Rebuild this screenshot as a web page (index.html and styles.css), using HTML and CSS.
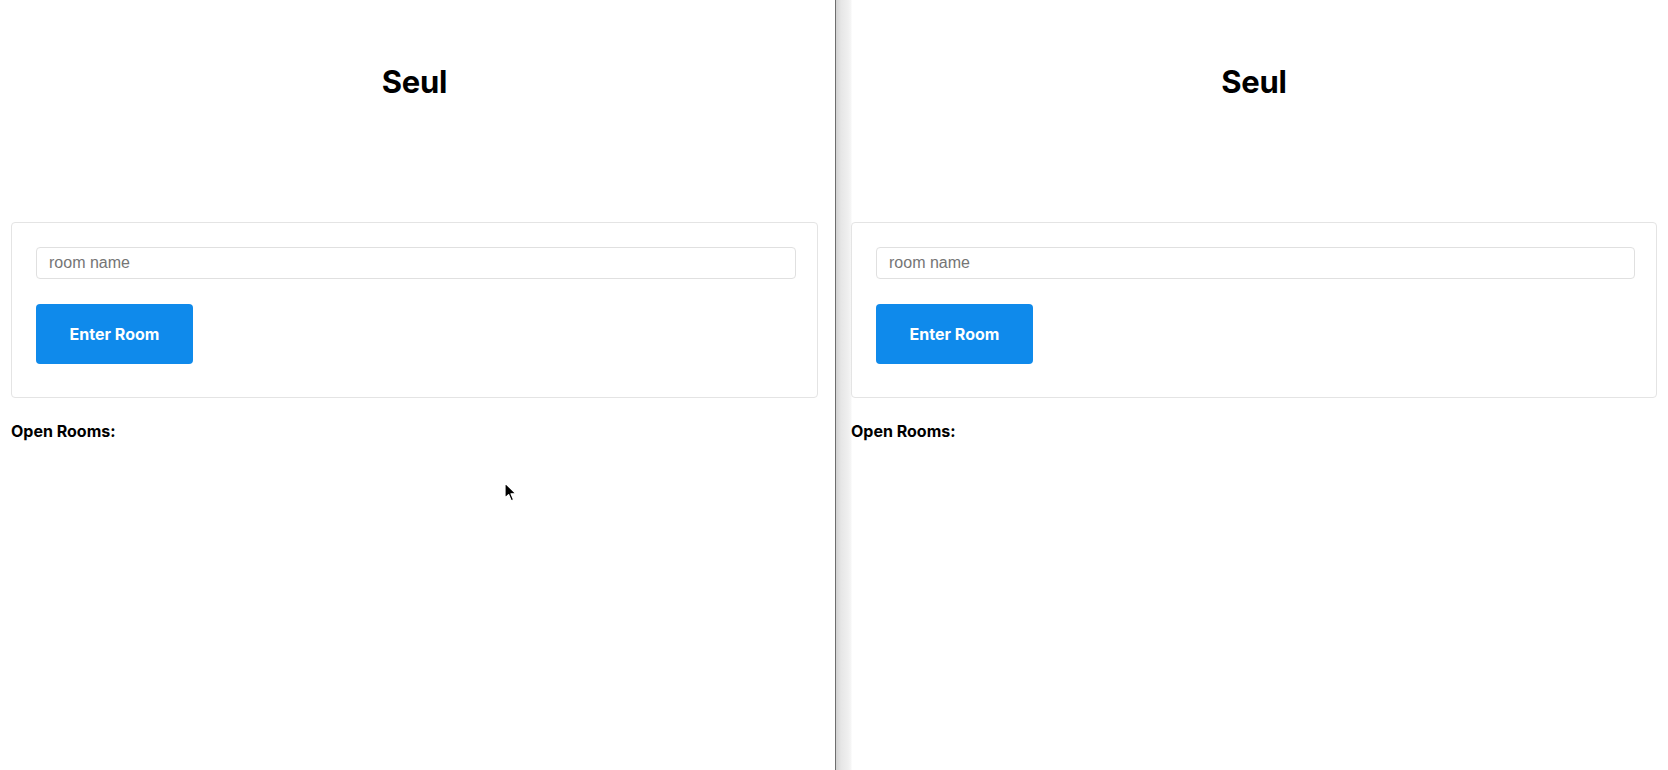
FILE: index.html
```html
<!DOCTYPE html>
<html lang="en">
<head>
<meta charset="utf-8">
<title>Seul</title>
<link rel="stylesheet" href="styles.css">
</head>
<body>
<div class="screen">
  <section class="pane pane-left">
    <h1 class="title">Seul</h1>
    <div class="card">
      <input class="room-input" type="text" placeholder="room name">
      <button class="enter-btn">Enter Room</button>
    </div>
    <h3 class="rooms-heading">Open Rooms:</h3>
  </section>
  <div class="gap"></div>
  <div class="divider"></div>
  <section class="pane pane-right">
    <h1 class="title">Seul</h1>
    <div class="card">
      <input class="room-input" type="text" placeholder="room name">
      <button class="enter-btn">Enter Room</button>
    </div>
    <h3 class="rooms-heading">Open Rooms:</h3>
  </section>
  <svg class="cursor" width="14" height="21" viewBox="0 0 14 21">
    <path d="M1 1 L1 16 L4.6 12.6 L7.2 18.8 L9.6 17.8 L7 11.8 L12 11.8 Z" fill="#000" stroke="#fff" stroke-width="1.2" stroke-linejoin="round"/>
  </svg>
</div>
</body>
</html>
```

FILE: styles.css
```css
* { box-sizing: border-box; }

html, body {
  margin: 0;
  padding: 0;
  background: #ffffff;
}

.screen {
  position: relative;
  display: flex;
  width: 1668px;
  height: 770px;
  overflow: hidden;
  font-family: Inter, "Noto Sans", sans-serif;
  color: #000;
}

.pane {
  display: flex;
  flex-direction: column;
  padding: 0 11px;
}

.pane-left {
  width: 829px;
  flex: 0 0 829px;
}

.gap {
  flex: 0 0 6px;
  background: #ffffff;
}

.divider {
  flex: 0 0 1px;
  background: #6e6e6e;
}

.pane-right {
  flex: 1 1 auto;
  padding-left: 15px;
  background: linear-gradient(to right, #d2d2d2 0px, #e6e6e6 5px, #efefef 12px, #f6f6f6 15px, #ffffff 16px);
}

.title {
  margin: 63px 0 0;
  font-size: 31px;
  font-weight: 700;
  line-height: 37px;
  text-align: center;
  letter-spacing: -0.2px;
}

.card {
  margin-top: 122px;
  border: 1px solid #e4e4e4;
  border-radius: 4px;
  padding: 24px 21px 33px 24px;
  display: flex;
  flex-direction: column;
  align-items: flex-start;
  background: #ffffff;
}

.room-input {
  width: 100%;
  height: 32px;
  border: 1px solid #e0e0e0;
  border-radius: 4px;
  padding: 0 12px;
  font-family: "Liberation Sans", Arial, sans-serif;
  font-size: 16px;
  color: #222;
  background: #fff;
  outline: none;
}

.room-input::placeholder {
  color: #757575;
}

.enter-btn {
  margin-top: 25px;
  width: 157px;
  height: 60px;
  border: none;
  border-radius: 4px;
  background: #0f8aeb;
  color: #ffffff;
  font-family: Inter, "Noto Sans", sans-serif;
  font-size: 16px;
  font-weight: 700;
  letter-spacing: 0;
}

.rooms-heading {
  margin: 24px 0 0;
  font-size: 16px;
  font-weight: 700;
  line-height: 19px;
}

.cursor {
  position: absolute;
  left: 504px;
  top: 482px;
}
```
